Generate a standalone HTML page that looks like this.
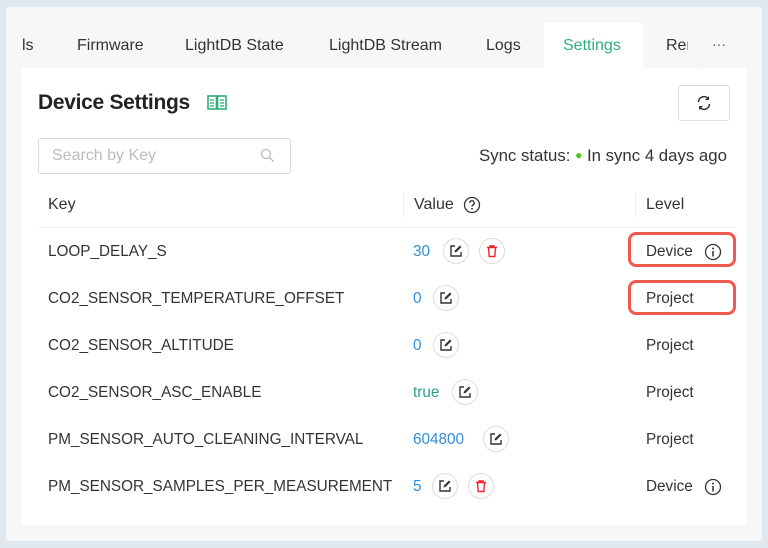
<!DOCTYPE html>
<html><head><meta charset="utf-8"><style>
*{margin:0;padding:0;box-sizing:border-box}
body{width:768px;height:548px;background:#e1e7ef;font-family:"Liberation Sans",sans-serif;color:#333;position:relative;overflow:hidden;font-size:15.3px}
.a{position:absolute;white-space:nowrap}
.card{left:6px;top:7px;width:756px;height:534px;background:#f6f7f9;border-radius:4px}
.panel{left:22px;top:68px;width:724px;height:457px;background:#fff}
.tab{top:37px;font-size:16px;color:#333}
.btn{width:26px;height:26px;border:1px solid #ddd;border-radius:50%;display:flex;align-items:center;justify-content:center;position:absolute}
.val{color:#2f8fd8}
.hl{border:3px solid #f05a4d;border-radius:8px;position:absolute}
</style></head><body>
<div class="a card"></div>
<div class="a" style="left:544px;top:23px;width:99px;height:46px;background:#fff"></div>
<div class="a panel"></div>
<div class="a tab" style="left:22px">ls</div>
<div class="a tab" style="left:77px">Firmware</div>
<div class="a tab" style="left:185px">LightDB State</div>
<div class="a tab" style="left:329px">LightDB Stream</div>
<div class="a tab" style="left:486px">Logs</div>
<div class="a tab" style="left:563px;color:#2fae78">Settings</div>
<div class="a tab" style="left:666px;width:22px;overflow:hidden">Remote</div>
<div class="a" style="left:688px;top:23px;width:18px;height:46px;background:linear-gradient(to right,rgba(246,247,249,0),#f6f7f9)"></div>
<div class="a" style="left:712px;top:36px;font-size:14px;color:#555">···</div>
<div class="a" style="left:38px;top:91px;font-size:21px;font-weight:bold;color:#222;letter-spacing:-0.3px">Device Settings</div>
<svg class="a" style="left:207px;top:95px" width="20" height="16" viewBox="0 0 20 16"><rect x="1" y="1" width="8.5" height="13" fill="none" stroke="#2fae78" stroke-width="1.6"/><rect x="10.5" y="1" width="8.5" height="13" fill="none" stroke="#2fae78" stroke-width="1.6"/><path d="M3 5h4M3 8h4M3 11h4M13 5h4M13 8h4M13 11h4" stroke="#2fae78" stroke-width="1.2"/></svg>
<div class="a" style="left:678px;top:85px;width:52px;height:36px;border:1px solid #ddd;border-radius:3px"></div>
<svg class="a" style="left:695px;top:94px" width="18" height="18" viewBox="0 0 18 18"><path d="M3.5 8A5.5 5.5 0 0 1 13.5 5M14.5 10A5.5 5.5 0 0 1 4.5 13" fill="none" stroke="#333" stroke-width="1.6"/><path d="M14 2v4h-4z M4 16v-4h4z" fill="#333"/></svg>
<div class="a" style="left:38px;top:138px;width:253px;height:36px;border:1px solid #d9d9d9;border-radius:3px"></div>
<div class="a" style="left:52px;top:147px;color:#bbb;font-size:16px">Search by Key</div>
<svg class="a" style="left:260px;top:148px" width="15" height="15" viewBox="0 0 15 15"><circle cx="6" cy="6" r="4.5" fill="none" stroke="#bbb" stroke-width="1.3"/><path d="M9.5 9.5l4 4" stroke="#bbb" stroke-width="1.3"/></svg>
<div class="a" style="left:479px;top:146px;font-size:16.8px">Sync status: <span style="color:#52c41a;font-size:12px;position:relative;top:-2px">●</span> In sync 4 days ago</div>
<div class="a" style="left:403px;top:192px;width:1px;height:26px;background:#eee"></div>
<div class="a" style="left:635px;top:192px;width:1px;height:26px;background:#eee"></div>
<div class="a" style="left:38px;top:227px;width:697px;height:1px;background:#eee"></div>
<div class="a" style="left:48px;top:196px;font-size:16px">Key</div>
<div class="a" style="left:414px;top:196px;font-size:16px">Value</div>
<svg class="a" style="left:463px;top:196px" width="18" height="18" viewBox="0 0 18 18"><circle cx="9" cy="9" r="7.5" fill="none" stroke="#333" stroke-width="1.3"/><path d="M6.8 7a2.2 2.2 0 1 1 3 2c-.6.3-.8.7-.8 1.5" fill="none" stroke="#333" stroke-width="1.3"/><circle cx="9" cy="12.8" r=".9" fill="#333"/></svg>
<div class="a" style="left:646px;top:196px;font-size:16px">Level</div>

<div class="a" style="left:48px;top:243px">LOOP_DELAY_S</div>
<div class="a val" style="left:413px;top:243px">30</div>
<div class="a" style="left:646px;top:243px">Device</div>

<div class="a" style="left:48px;top:290px">CO2_SENSOR_TEMPERATURE_OFFSET</div>
<div class="a val" style="left:413px;top:290px">0</div>
<div class="a" style="left:646px;top:290px">Project</div>

<div class="a" style="left:48px;top:337px">CO2_SENSOR_ALTITUDE</div>
<div class="a val" style="left:413px;top:337px">0</div>
<div class="a" style="left:646px;top:337px">Project</div>

<div class="a" style="left:48px;top:384px">CO2_SENSOR_ASC_ENABLE</div>
<div class="a" style="left:413px;top:384px;color:#2a9d8f">true</div>
<div class="a" style="left:646px;top:384px">Project</div>

<div class="a" style="left:48px;top:431px">PM_SENSOR_AUTO_CLEANING_INTERVAL</div>
<div class="a val" style="left:413px;top:431px">604800</div>
<div class="a" style="left:646px;top:431px">Project</div>

<div class="a" style="left:48px;top:478px">PM_SENSOR_SAMPLES_PER_MEASUREMENT</div>
<div class="a val" style="left:413px;top:478px">5</div>
<div class="a" style="left:646px;top:478px">Device</div>

<div class="hl" style="left:628px;top:232px;width:108px;height:35px"></div>
<div class="hl" style="left:628px;top:280px;width:108px;height:35px"></div>

<svg width="0" height="0" style="position:absolute"><defs>
<symbol id="ed" viewBox="0 0 14 14"><path d="M6 2H2v10h10V8" fill="none" stroke="#333" stroke-width="1.4"/><path d="M5.5 8.5l.4-2L11 1.5l1.5 1.5L7.5 8z" fill="#333"/></symbol>
<symbol id="tr" viewBox="0 0 14 14"><path d="M2 3.5h10M5 3.5V2h4v1.5M3.5 3.5l.7 9h5.6l.7-9" fill="none" stroke="#f5222d" stroke-width="1.4"/></symbol>
<symbol id="in" viewBox="0 0 18 18"><circle cx="9" cy="9" r="7.5" fill="none" stroke="#333" stroke-width="1.3"/><circle cx="9" cy="5.5" r="1" fill="#333"/><path d="M9 8v5.5" stroke="#333" stroke-width="1.5"/></symbol>
</defs></svg>
<div class="btn" style="left:443px;top:238px"><svg width="14" height="14"><use href="#ed"/></svg></div>
<div class="btn" style="left:479px;top:238px"><svg width="14" height="14"><use href="#tr"/></svg></div>
<div class="btn" style="left:433px;top:285px"><svg width="14" height="14"><use href="#ed"/></svg></div>
<div class="btn" style="left:433px;top:332px"><svg width="14" height="14"><use href="#ed"/></svg></div>
<div class="btn" style="left:452px;top:379px"><svg width="14" height="14"><use href="#ed"/></svg></div>
<div class="btn" style="left:483px;top:426px"><svg width="14" height="14"><use href="#ed"/></svg></div>
<div class="btn" style="left:432px;top:473px"><svg width="14" height="14"><use href="#ed"/></svg></div>
<div class="btn" style="left:468px;top:473px"><svg width="14" height="14"><use href="#tr"/></svg></div>
<svg class="a" style="left:704px;top:243px" width="18" height="18"><use href="#in"/></svg>
<svg class="a" style="left:704px;top:478px" width="18" height="18"><use href="#in"/></svg>
</body></html>
